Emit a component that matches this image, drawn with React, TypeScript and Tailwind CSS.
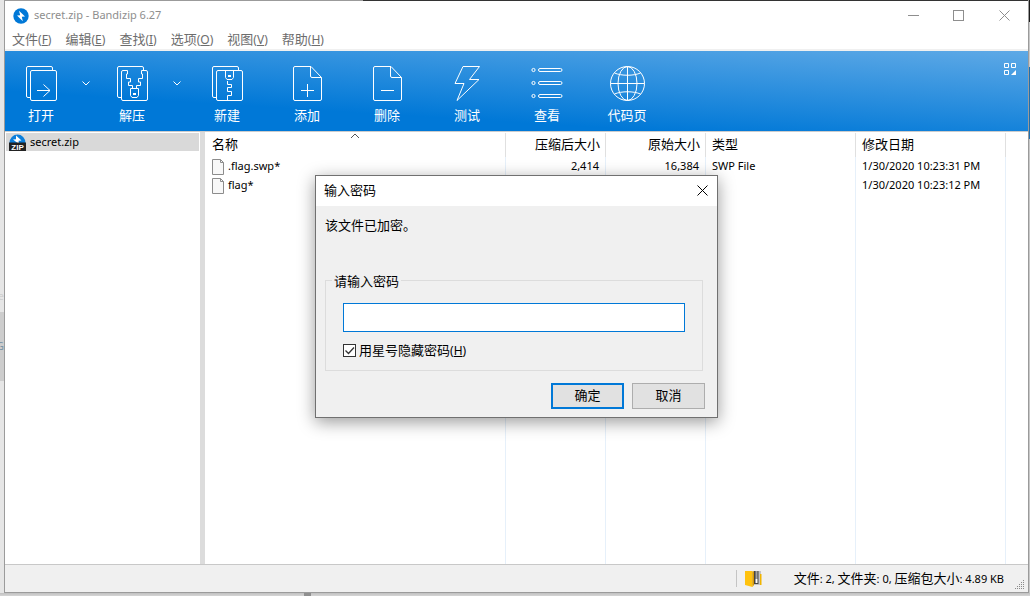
import { useState } from 'react';
import type { ReactNode } from 'react';

interface Tool {
  label: string;
  icon: ReactNode;
  hasMenu?: boolean;
}

interface FileRow {
  name: string;
  packed: string;
  size: string;
  type: string;
  date: string;
}

const menus = [
  { text: '文件', key: 'F' },
  { text: '编辑', key: 'E' },
  { text: '查找', key: 'I' },
  { text: '选项', key: 'O' },
  { text: '视图', key: 'V' },
  { text: '帮助', key: 'H' },
];

const files: FileRow[] = [
  { name: '.flag.swp*', packed: '2,414', size: '16,384', type: 'SWP File', date: '1/30/2020 10:23:31 PM' },
  { name: 'flag*', packed: '', size: '', type: '', date: '1/30/2020 10:23:12 PM' },
];

function Line({ width, children }: { width: number; children: ReactNode }) {
  return (
    <svg width={width} height="36" viewBox={`0 0 ${width} 36`} fill="none" stroke="#fff" strokeWidth="1">
      {children}
    </svg>
  );
}

// edge of the sheet that peeks out behind
function BackSheet() {
  return <path d="M4.5 31.5H2A1.5 1.5 0 0 1 .5 30V2A1.5 1.5 0 0 1 2 .5h23A1.5 1.5 0 0 1 26.5 2v2.5" />;
}

function Sheets() {
  return (
    <>
      <BackSheet />
      <rect x="4.5" y="4.5" width="26" height="30" rx="1.5" />
    </>
  );
}

function Sheet() {
  return (
    <>
      <path d="M18 .5H2A1.5 1.5 0 0 0 .5 2v31A1.5 1.5 0 0 0 2 34.5h25a1.5 1.5 0 0 0 1.5-1.5V11.5z" />
      <path d="M17.5 .5v9.5a1.5 1.5 0 0 0 1.5 1.5h9.5" />
    </>
  );
}

const tools: Tool[] = [
  {
    label: '打开',
    hasMenu: true,
    icon: (
      <Line width={31}>
        <Sheets />
        <path d="M11 24.5h13M17.5 18.5l6.5 6-6.5 6" />
      </Line>
    ),
  },
  {
    label: '解压',
    hasMenu: true,
    icon: (
      <Line width={31}>
        <BackSheet />
        <path d="M10.5 4.5H6A1.5 1.5 0 0 0 4.5 6v27A1.5 1.5 0 0 0 6 34.5h23a1.5 1.5 0 0 0 1.5-1.5V6A1.5 1.5 0 0 0 29 4.5h-4.5" />
        <path d="M10.5 4.5v3.500h-1v4.500h4v3.500h-2v3.500h4v3M24.500 4.500v3.500h1v4.500h-4v3.500h2v3.500h-4v3" />
        <path d="M13.500 22.500h8v7l-1.500 2h-5l-1.500-2z" />
        <rect x="16" y="27" width="3" height="2" fill="#fff" stroke="none" />
      </Line>
    ),
  },
  {
    label: '新建',
    icon: (
      <Line width={31}>
        <Sheets />
        <path d="M13.500 4.500v7l1.500 2h5l1.500-2v-7" />
        <rect x="16" y="9" width="3" height="2" fill="#fff" stroke="none" />
        <path d="M15.500 15v3.500h4v3h-4v4h4v4h-4v5" />
      </Line>
    ),
  },
  {
    label: '添加',
    icon: (
      <Line width={29}>
        <Sheet />
        <path d="M8 24.5h13M14.5 18v13" />
      </Line>
    ),
  },
  {
    label: '删除',
    icon: (
      <Line width={29}>
        <Sheet />
        <path d="M8 24.5h13" />
      </Line>
    ),
  },
  {
    label: '测试',
    icon: (
      <Line width={27}>
        <path d="M9 .5h16.5L15.5 13.5h9.5L3 34.5l7-17H1z" />
      </Line>
    ),
  },
  {
    label: '查看',
    icon: (
      <Line width={32}>
        {[4, 17, 30].map((y) => (
          <g key={y}>
            <circle cx="2.5" cy={y} r="1.6" />
            <rect x="7.5" y={y - 1.5} width="23.5" height="3" rx="1.5" />
          </g>
        ))}
      </Line>
    ),
  },
  {
    label: '代码页',
    icon: (
      <Line width={35}>
        <circle cx="17.5" cy="17.5" r="17" />
        <ellipse cx="17.5" cy="17.5" rx="9.5" ry="17" />
        <path d="M17.5 .5v34M.5 17.5h34M4.5 7c7 3 19 3 26 0M4.5 28c7-3 19-3 26 0" />
      </Line>
    ),
  },
];

function AppIcon() {
  return (
    <svg width="16" height="16" viewBox="0 0 16 16">
      <circle cx="8" cy="8" r="7.7" fill="#0078d7" />
      <path d="M6 2.800l6 5.700-3.200.2 1 4.500L4 7.600l3.200-.3z" fill="#fff" />
    </svg>
  );
}

function ZipIcon() {
  return (
    <svg width="17" height="17" viewBox="0 0 17 17">
      <path d="M.5 9a8 8.5 0 0 1 16 0z" fill="#0a7fdc" />
      <path d="M7 1.5l5.5 5-3 .3.500 2.200H8.500L4 5.500l3-.2z" fill="#fff" />
      <rect y="8.5" width="17" height="8.5" fill="#222" />
      <text x="8.5" y="15.7" fontSize="8" fontWeight="700" fontFamily="Liberation Sans, sans-serif" fill="#fff" textAnchor="middle">ZIP</text>
    </svg>
  );
}

function FileIcon() {
  return (
    <svg width="12" height="16" viewBox="0 0 12 16" className="shrink-0">
      <path d="M.5.5h8l3 3v12H.5z" fill="#f8f8f8" stroke="#8c8c8c" />
      <path d="M8.5.5v3h3" fill="none" stroke="#8c8c8c" />
    </svg>
  );
}

function FolderIcon() {
  return (
    <svg width="17" height="18" viewBox="0 0 17 18">
      <path d="M5 1h11v14H5z" fill="#c4c4c4" />
      <path d="M9 1h4.500v13H9z" fill="#444" />
      <path d="M11.500 1.500v7" stroke="#fff" strokeWidth="2" strokeDasharray="1 1" />
      <rect x="10.5" y="9" width="2" height="4" fill="#fff" />
      <path d="M15 4h1.500v11H15z" fill="#f0b400" />
      <path d="M0 1h7.500v16L0 15z" fill="#ffc20e" />
      <path d="M7.500 2L9 1v14l-1.500 2z" fill="#d99a00" />
    </svg>
  );
}

function Grip() {
  const dots = [[8, 0], [6, 2], [8, 2], [4, 4], [6, 4], [8, 4], [2, 6], [4, 6], [6, 6], [8, 6], [0, 8], [2, 8], [4, 8], [6, 8], [8, 8]];
  return (
    <svg width="9" height="9" viewBox="0 0 9 9" fill="#8a8a8a">
      {dots.map(([x, y]) => <rect key={`${x}-${y}`} x={x} y={y} width="1" height="1" />)}
    </svg>
  );
}

function Cross({ color }: { color: string }) {
  return (
    <svg width="11" height="11" viewBox="0 0 11 11" fill="none" stroke={color}>
      <path d="M.5.5l10 10M10.5.5l-10 10" />
    </svg>
  );
}

function TitleBar() {
  return (
    <header className="flex h-[29px] shrink-0 items-center bg-white">
      <div className="flex flex-1 items-center gap-[5px] pl-2 text-[11px] text-[#8e8e8e]">
        <AppIcon />
        <h1>secret.zip - Bandizip 6.27</h1>
      </div>
      <button aria-label="最小化" className="flex h-full w-[45px] items-center justify-center">
        <span className="h-px w-[11px] bg-[#8e8e8e]" />
      </button>
      <button aria-label="最大化" className="flex h-full w-[45px] items-center justify-center">
        <span className="size-[11px] border border-[#8e8e8e]" />
      </button>
      <button aria-label="关闭" className="flex h-full w-[47px] items-center justify-center">
        <Cross color="#8e8e8e" />
      </button>
    </header>
  );
}

function MenuBar() {
  return (
    <nav className="flex h-[21px] shrink-0 items-center gap-[14px] border-b-2 border-[#f0f0f0] bg-white pl-[7px] text-[13px] text-[#6d6d6d]">
      {menus.map((m) => (
        <button key={m.key} className="whitespace-nowrap">
          {m.text}
          <span className="text-[12px]">(<u>{m.key}</u>)</span>
        </button>
      ))}
    </nav>
  );
}

function Toolbar() {
  return (
    <div className="flex h-[80px] shrink-0 bg-[linear-gradient(3.5deg,#0078d7_28%,#5ea9e6_100%)] text-[13px] text-white">
      {tools.map((tool) => (
        <div key={tool.label} className="flex">
          <button className={`flex flex-col items-center pt-[15px] ${tool.hasMenu ? 'w-[72px]' : 'w-[80px]'}`}>
            {tool.icon}
            <span className="mt-[3px] leading-5">{tool.label}</span>
          </button>
          {tool.hasMenu && (
            <button aria-label={`${tool.label}菜单`} className="mr-px flex w-[18px] justify-center pt-[30px]">
              <svg width="8" height="5" viewBox="0 0 8 5" fill="none" stroke="#fff"><path d="M.5.5L4 4 7.5.5" /></svg>
            </button>
          )}
        </div>
      ))}
      <button aria-label="布局" className="mt-3 mr-3 ml-auto self-start">
        <svg width="12" height="12" viewBox="0 0 12 12" fill="none" stroke="#fff">
          <path d="M.5.5h4v4h-4zM7.5.5h4v4h-4zM.5 7.5h4v4h-4z" />
          <path d="M12 7v5H7z" fill="#fff" stroke="none" />
        </svg>
      </button>
    </div>
  );
}

function Sidebar() {
  return (
    <aside className="w-[195px] shrink-0 p-px">
      <button className="flex h-[18px] w-full items-center gap-1 bg-[#d9d9d9] pl-[3px] text-[11px]">
        <ZipIcon />
        secret.zip
      </button>
    </aside>
  );
}

function FileList() {
  const head = 'border-r border-[#e0e0e0] pr-[5px] font-normal whitespace-nowrap';
  const cell = 'border-r border-[#e6f0fa] px-[6px] whitespace-nowrap';
  return (
    <section className="min-w-0 flex-1 overflow-hidden border-l-5 border-[#dcdcdc] pt-px">
      <table className="h-full w-full table-fixed border-separate border-spacing-0 text-left text-[11px]">
        <colgroup>
          <col className="w-[301px]" />
          <col className="w-[100px]" />
          <col className="w-[100px]" />
          <col className="w-[150px]" />
          <col className="w-[150px]" />
          <col />
        </colgroup>
        <thead className="text-[13px]">
          <tr className="h-[24px]">
            <th className={`relative pl-[7px] ${head}`}>
              名称
              <svg className="absolute top-0 left-1/2 -translate-x-1/2" width="9" height="6" viewBox="0 0 9 6" fill="none" stroke="#555">
                <path d="M.5 5l4-4 4 4" />
              </svg>
            </th>
            <th className={`text-right ${head}`}>压缩后大小</th>
            <th className={`text-right ${head}`}>原始大小</th>
            <th className={`pl-[6px] ${head}`}>类型</th>
            <th className={`pl-[6px] ${head}`}>修改日期</th>
            <th />
          </tr>
        </thead>
        <tbody>
          {files.map((f) => (
            <tr key={f.name} className="h-[19px]">
              <td className={cell}>
                <div className="flex items-center gap-1 pl-px">
                  <FileIcon />
                  {f.name}
                </div>
              </td>
              <td className={`text-right ${cell}`}>{f.packed}</td>
              <td className={`text-right ${cell}`}>{f.size}</td>
              <td className={cell}>{f.type}</td>
              <td className={cell}>{f.date}</td>
              <td />
            </tr>
          ))}
          {/* keeps the column rules running to the bottom */}
          <tr aria-hidden="true">
            <td className={cell} />
            <td className={cell} />
            <td className={cell} />
            <td className={cell} />
            <td className={cell} />
            <td />
          </tr>
        </tbody>
      </table>
    </section>
  );
}

function StatusBar() {
  const stats = [
    { label: '文件', value: ': 2, ' },
    { label: '文件夹', value: ': 0, ' },
    { label: '压缩包大小', value: ': 4.89 KB' },
  ];
  return (
    <footer className="flex h-7 shrink-0 items-center justify-end border-t border-[#c8c8c8] bg-[#f0f0f0]">
      <span className="mr-2 h-[17px] w-px bg-[#c4c4c4]" />
      <FolderIcon />
      <p className="ml-8 text-[13px] whitespace-pre">
        {stats.map((s) => (
          <span key={s.label}>{s.label}<span className="text-[11px]">{s.value}</span></span>
        ))}
      </p>
      <span className="mr-1 mb-[3px] ml-[11px] self-end"><Grip /></span>
    </footer>
  );
}

function PasswordDialog() {
  const [password, setPassword] = useState('');
  const [masked, setMasked] = useState(true);
  const btn = 'h-[26px] w-[73px] bg-[#e1e1e1]';

  return (
    <div role="dialog" aria-labelledby="dlg-title" className="w-[403px] border border-[#707070] bg-[#f0f0f0] text-[13px] shadow-[0_4px_16px_rgba(0,0,0,0.4)]">
      <div className="flex h-[30px] items-center justify-between bg-white pr-[9px] pl-2">
        <h2 id="dlg-title">输入密码</h2>
        <button aria-label="关闭"><Cross color="#000" /></button>
      </div>
      <form className="px-[9px] pt-[9px] pb-2" onSubmit={(e) => e.preventDefault()}>
        <p className="leading-5">该文件已加密。</p>
        <fieldset className="mt-9 mr-[5px] border border-[#dcdcdc] px-[17px] pb-[9px]">
          <legend className="-ml-[11px] px-[2px] leading-5">请输入密码</legend>
          <input
            type={masked ? 'password' : 'text'}
            aria-label="请输入密码"
            value={password}
            onChange={(e) => setPassword(e.target.value)}
            className="mt-3 block h-[29px] w-full border border-[#0078d7] bg-white px-1 outline-none"
          />
          <label className="mt-2 flex items-center gap-[3px] leading-5">
            <span className="grid">
              <input
                type="checkbox"
                checked={masked}
                onChange={(e) => setMasked(e.target.checked)}
                className="peer col-start-1 row-start-1 size-[13px] appearance-none border border-[#333] bg-white"
              />
              <svg className="pointer-events-none invisible col-start-1 row-start-1 peer-checked:visible" width="13" height="13" viewBox="0 0 13 13" fill="none" stroke="#333" strokeWidth="1.3">
                <path d="M2.5 6.5l3 3 5.500-6" />
              </svg>
            </span>
            <span>用星号隐藏密码<span className="text-[12px]">(<u>H</u>)</span></span>
          </label>
        </fieldset>
        <div className="mt-3 mr-[3px] flex justify-end gap-2">
          <button type="submit" className={`border-2 border-[#0078d7] ${btn}`}>确定</button>
          <button type="button" className={`border border-[#adadad] ${btn}`}>取消</button>
        </div>
      </form>
    </div>
  );
}

export default function App() {
  return (
    <div className="flex h-screen flex-col overflow-hidden bg-[#e9e9e9] font-['Noto_Sans','Noto_Sans_CJK_SC',sans-serif] text-black">
      <div className="flex min-h-0 flex-1">
        {/* slice of the window behind */}
        <div aria-hidden="true" className="flex w-1 shrink-0 flex-col overflow-hidden bg-[#e6e6e6] text-[11px]">
          <div className="flex h-[312px] items-end justify-end pb-2 leading-4 text-[#cfcfcf]">e</div>
          <div className="flex h-[69px] items-center justify-end bg-[#cdcdcd] text-[#7d96a8]">G</div>
        </div>
        <div className="relative flex min-w-0 flex-1 flex-col border-x border-b border-[#9b9b9b] bg-white">
          <div className="flex h-px shrink-0">
            <div className="w-[358px] bg-[#9b9b9b]" />
            <div className="flex-1 bg-[#333]" />
          </div>
          <TitleBar />
          <MenuBar />
          <Toolbar />
          <main className="flex min-h-0 flex-1 border-t border-[#ccc]">
            <Sidebar />
            <FileList />
          </main>
          <StatusBar />
          <div className="absolute inset-0 flex items-center justify-center">
            <PasswordDialog />
          </div>
        </div>
        <div aria-hidden="true" className="flex w-px shrink-0 flex-col bg-[#c8c8c8]">
          <div className="h-[22px] bg-[#1c1c1c]" />
          <div className="h-[45px]" />
          <div className="h-[72px] bg-[#1f6fae]" />
        </div>
      </div>
      <div className="flex h-[3px] shrink-0 bg-linear-to-b from-[#c0c0c0] to-[#d6d6d6] pl-[304px]">
        <div className="w-[7px] bg-[#8f8f8f]" />
      </div>
    </div>
  );
}
